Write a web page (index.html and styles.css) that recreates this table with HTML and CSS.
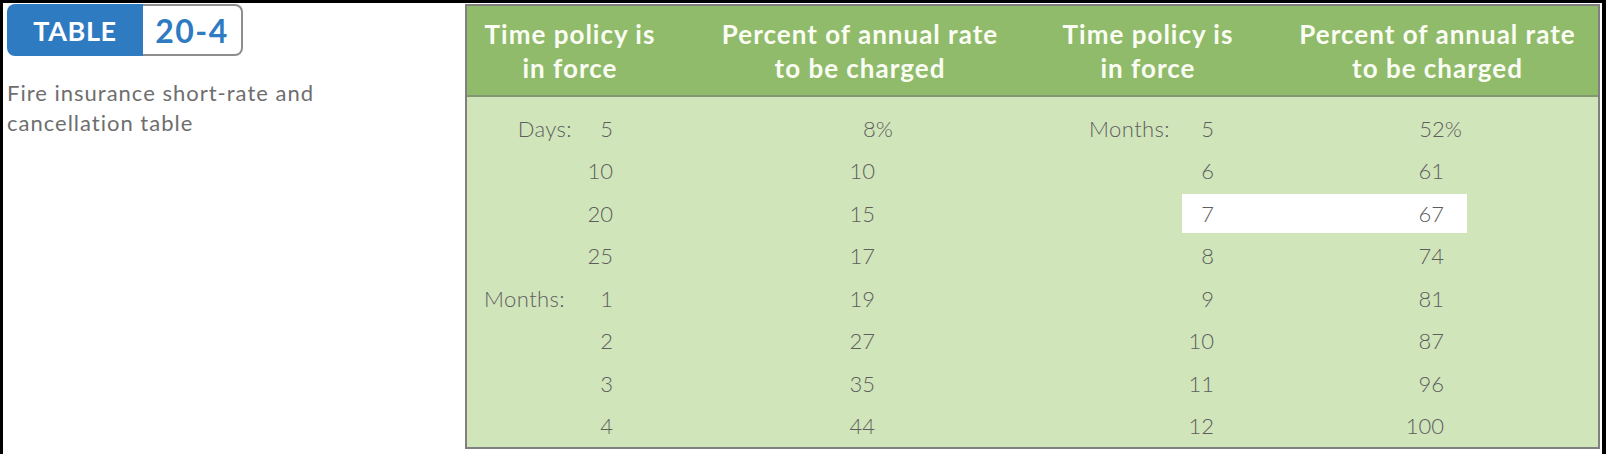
FILE: index.html
```html
<!DOCTYPE html>
<html lang="en">
<head>
<meta charset="utf-8">
<title>Table 20-4</title>
<link rel="stylesheet" href="styles.css">
</head>
<body>
<div class="frame">
  <aside class="side">
    <div class="badge"><span class="badge-label">TABLE</span><span class="badge-num">20-4</span></div>
    <p class="caption">Fire insurance short-rate and<br>cancellation table</p>
  </aside>
  <section class="table">
    <div class="thead">
      <div class="th">Time policy is<br>in force</div>
      <div class="th">Percent of annual rate<br>to be charged</div>
      <div class="th">Time policy is<br>in force</div>
      <div class="th th-last">Percent of annual rate<br>to be charged</div>
    </div>
    <div class="tbody">
      <div class="row">
        <div class="cell c1"><span class="lbl lbl-days">Days:</span><span class="num">5</span></div>
        <div class="cell c2"><span class="num">8<span class="pct">%</span></span></div>
        <div class="cell c3"><span class="lbl">Months:</span><span class="num">5</span></div>
        <div class="cell c4"><span class="num">52<span class="pct">%</span></span></div>
      </div>
      <div class="row">
        <div class="cell c1"><span class="num">10</span></div>
        <div class="cell c2"><span class="num">10</span></div>
        <div class="cell c3"><span class="num">6</span></div>
        <div class="cell c4"><span class="num">61</span></div>
      </div>
      <div class="row">
        <div class="cell c1"><span class="num">20</span></div>
        <div class="cell c2"><span class="num">15</span></div>
        <div class="hl"><span class="num">7</span><span class="num">67</span></div>
      </div>
      <div class="row">
        <div class="cell c1"><span class="num">25</span></div>
        <div class="cell c2"><span class="num">17</span></div>
        <div class="cell c3"><span class="num">8</span></div>
        <div class="cell c4"><span class="num">74</span></div>
      </div>
      <div class="row">
        <div class="cell c1"><span class="lbl lbl-months">Months:</span><span class="num">1</span></div>
        <div class="cell c2"><span class="num">19</span></div>
        <div class="cell c3"><span class="num">9</span></div>
        <div class="cell c4"><span class="num">81</span></div>
      </div>
      <div class="row">
        <div class="cell c1"><span class="num">2</span></div>
        <div class="cell c2"><span class="num">27</span></div>
        <div class="cell c3"><span class="num">10</span></div>
        <div class="cell c4"><span class="num">87</span></div>
      </div>
      <div class="row">
        <div class="cell c1"><span class="num">3</span></div>
        <div class="cell c2"><span class="num">35</span></div>
        <div class="cell c3"><span class="num">11</span></div>
        <div class="cell c4"><span class="num">96</span></div>
      </div>
      <div class="row">
        <div class="cell c1"><span class="num">4</span></div>
        <div class="cell c2"><span class="num">44</span></div>
        <div class="cell c3"><span class="num">12</span></div>
        <div class="cell c4"><span class="num">100</span></div>
      </div>
    </div>
  </section>
</div>
</body>
</html>
```

FILE: styles.css
```css
html, body {
  margin: 0;
  padding: 0;
  background: #000;
}

.frame {
  box-sizing: border-box;
  width: 1606px;
  height: 454px;
  border-top: 3px solid #000;
  border-left: 3px solid #000;
  border-right: 4px solid #000;
  background: #fff;
  display: flex;
  font-family: Lato, "Liberation Sans", sans-serif;
}

.side {
  width: 458px;
  padding: 1px 0 0 4px;
  flex: none;
}

.badge {
  display: flex;
  width: 236px;
  height: 52px;
  box-sizing: border-box;
}

.badge-label {
  width: 136px;
  background: #2f7bc2;
  color: #fff;
  border-radius: 8px 0 0 8px;
  font-weight: 700;
  font-size: 27px;
  letter-spacing: 0.6px;
  display: flex;
  align-items: center;
  justify-content: center;
}

.badge-num {
  flex: 1;
  background: #fff;
  color: #2f7bc2;
  border: 2px solid #8e8e8e;
  border-left: none;
  border-radius: 0 8px 8px 0;
  font-weight: 700;
  font-size: 32px;
  letter-spacing: 1.5px;
  display: flex;
  align-items: center;
  justify-content: center;
}

.caption {
  margin: 22px 0 0 0;
  font-size: 22px;
  letter-spacing: 1px;
  line-height: 30px;
  color: #6e6e6e;
}

.table {
  box-sizing: border-box;
  width: 1135px;
  height: 445px;
  margin-top: 1px;
  border: 2px solid #808080;
  flex: none;
}

.thead {
  height: 89px;
  background: #8fbb6b;
  border-bottom: 2px solid #7f9872;
  display: grid;
  grid-template-columns: 206px 374px 202px 349px;
  align-items: center;
}

.th {
  text-align: center;
  color: #fbfdf4;
  font-weight: 700;
  font-size: 26px;
  letter-spacing: 1px;
  line-height: 34px;
}

.th-last {
  padding-left: 28px;
}

.tbody {
  height: 350px;
  box-sizing: border-box;
  padding-top: 10px;
  background: #d1e5bb;
}

.row {
  height: 42.5px;
  display: grid;
  grid-template-columns: 206px 374px 202px 349px;
  align-items: center;
  color: #5e5e5e;
  font-size: 22px;
  font-weight: 300;
}

.cell {
  display: flex;
  justify-content: flex-end;
  align-items: center;
}

.c1 { padding-right: 60px; }
.c2 { padding-right: 172px; }
.c3 { padding-right: 35px; }
.c4 { padding-right: 154px; }

.num {
  display: inline-block;
  min-width: 30px;
  text-align: right;
  white-space: nowrap;
}

.c2 .num, .c4 .num {
  min-width: 0;
}

.pct {
  margin-right: -18px;
}

.lbl {
  margin-right: 14px;
  letter-spacing: 0.4px;
}

.lbl-days {
  margin-right: 11px;
}

.lbl-months {
  margin-right: 18px;
}

.hl {
  grid-column: 3 / 5;
  margin-left: 135px;
  margin-right: 131px;
  height: 39px;
  background: #fff;
  display: flex;
  justify-content: space-between;
  align-items: center;
  padding: 0 23px 0 2px;
}
```
